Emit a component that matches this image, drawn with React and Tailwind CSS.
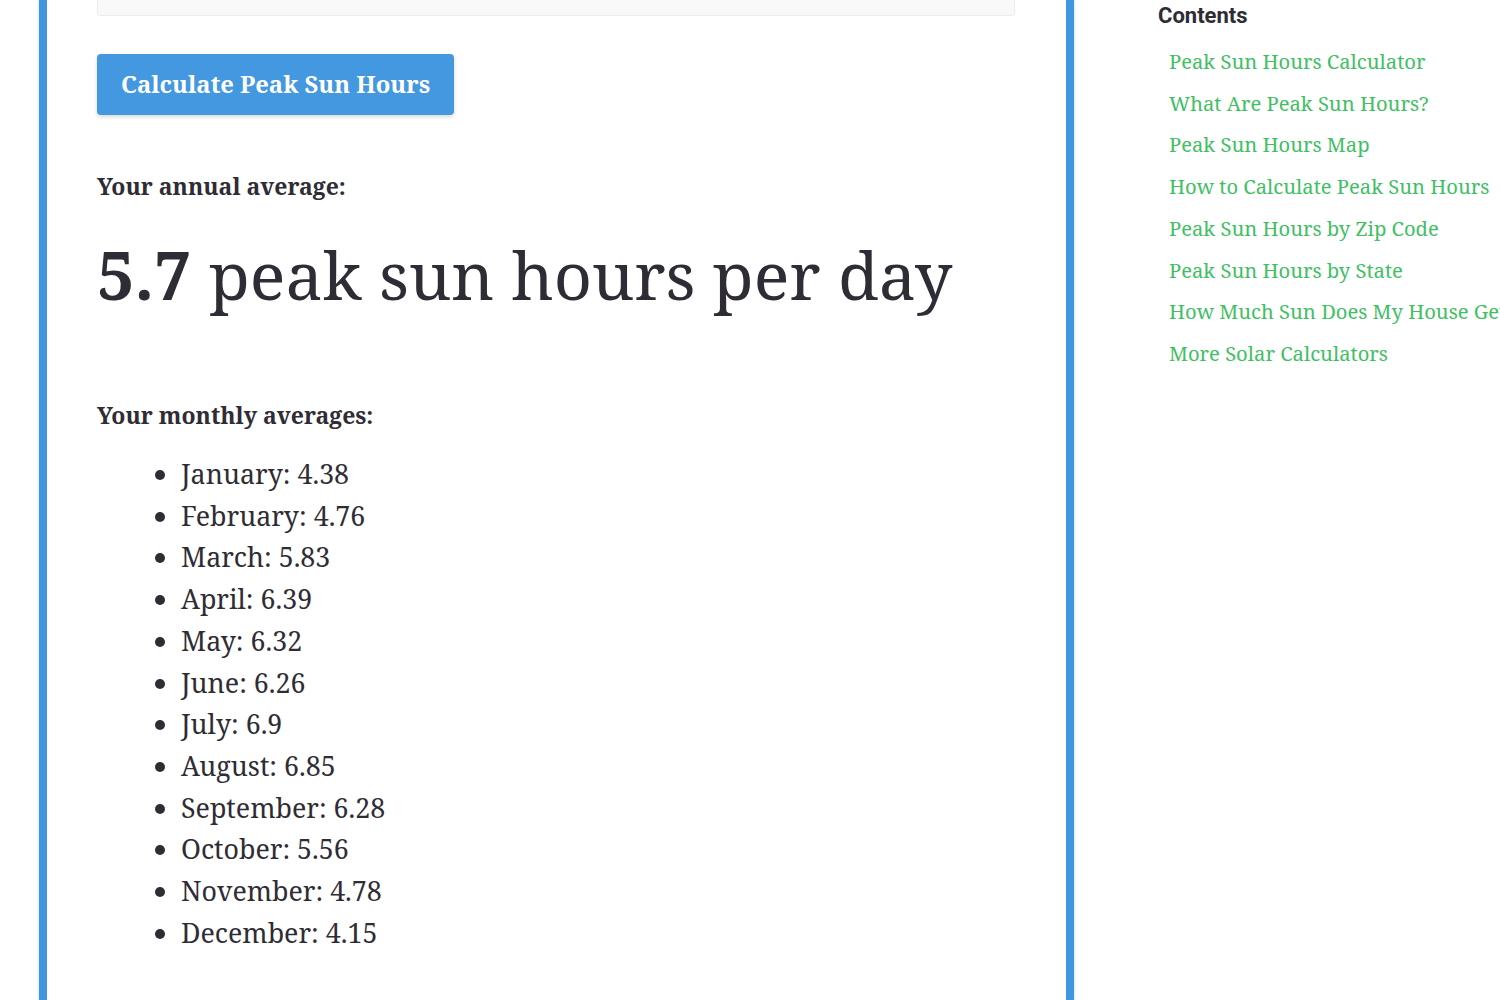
import React from "react";

const months = [
  ["January", "4.38"],
  ["February", "4.76"],
  ["March", "5.83"],
  ["April", "6.39"],
  ["May", "6.32"],
  ["June", "6.26"],
  ["July", "6.9"],
  ["August", "6.85"],
  ["September", "6.28"],
  ["October", "5.56"],
  ["November", "4.78"],
  ["December", "4.15"],
];

const links = [
  "Peak Sun Hours Calculator",
  "What Are Peak Sun Hours?",
  "Peak Sun Hours Map",
  "How to Calculate Peak Sun Hours",
  "Peak Sun Hours by Zip Code",
  "Peak Sun Hours by State",
  "How Much Sun Does My House Get?",
  "More Solar Calculators",
];

export default function App() {
  return (
    <div className="w-[1500px] h-[1000px] overflow-hidden bg-white flex font-['Noto_Serif','DejaVu_Serif',serif] text-[#2f2c35]">
      <div className="ml-[39px] w-[1035px] h-[1000px] shrink-0 border-x-[8px] border-[#4196e0] shadow-[0_0_3px_rgba(65,150,224,0.35)] pl-[50px] pr-[51px]">
        <div className="h-[16px] bg-[#f9f9f9] border-x border-b border-[#ececec] rounded-b-[4px]" />
        <button className="mt-[38px] h-[61px] px-[24px] flex items-center rounded-[4px] bg-[#4398e0] text-white font-bold text-[23.8px] shadow-[0_2px_4px_rgba(0,0,0,0.15)]">
          Calculate Peak Sun Hours
        </button>
        <div className="mt-[55px] text-[23px] leading-[32px] font-bold">Your annual average:</div>
        <div className="mt-[32px] text-[66.5px] leading-[80px]">
          <span className="font-bold">5.7</span> peak sun hours per day
        </div>
        <div className="mt-[85px] text-[23px] leading-[32px] font-bold">Your monthly averages:</div>
        <ul className="mt-[22px] list-disc pl-[84px] text-[26.8px] leading-[41.7px]">
          {months.map(([m, v]) => (
            <li key={m}>
              {m}: {v}
            </li>
          ))}
        </ul>
      </div>
      <div className="ml-[84px] shrink-0 w-[500px]">
        <div className="mt-[2px] font-['Roboto',sans-serif] font-bold text-[22px] leading-[28px] text-[#2f2c35]">Contents</div>
        <ul className="mt-[11px] pl-[11px] text-[20.2px] leading-[41.7px] text-[#3fc064] whitespace-nowrap">
          {links.map((l) => (
            <li key={l}>{l}</li>
          ))}
        </ul>
      </div>
    </div>
  );
}
